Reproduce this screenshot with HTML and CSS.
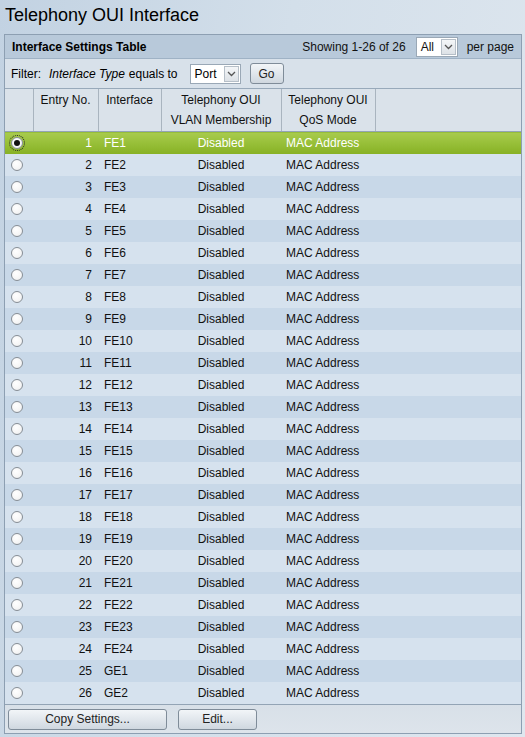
FILE: index.html
```html
<!DOCTYPE html>
<html>
<head>
<meta charset="utf-8">
<link rel="stylesheet" href="styles.css">
</head>
<body>
<h1 class="title">Telephony OUI Interface</h1>
<div class="panel">
  <div class="panel-head">
    <span class="panel-title">Interface Settings Table</span>
    <span class="paging">Showing 1-26 of 26
      <span class="select sel-all"><span class="sel-val">All</span><span class="sel-btn"><svg width="9" height="6" viewBox="0 0 9 6"><path d="M1 1 L4.5 4.5 L8 1" fill="none" stroke="#555" stroke-width="1.3"/></svg></span></span>
      per page</span>
  </div>
  <div class="filter">
    <span>Filter:</span>
    <span class="it">Interface Type</span>
    <span>equals to</span>
    <span class="select sel-port"><span class="sel-val">Port</span><span class="sel-btn"><svg width="9" height="6" viewBox="0 0 9 6"><path d="M1 1 L4.5 4.5 L8 1" fill="none" stroke="#555" stroke-width="1.3"/></svg></span></span>
    <span class="btn btn-go">Go</span>
  </div>
  <table class="grid">
    <colgroup>
      <col class="w-radio"><col class="w-entry"><col class="w-if"><col class="w-vlan"><col class="w-qos"><col>
    </colgroup>
    <thead>
      <tr>
        <th class="c-radio"></th>
        <th class="c-entry">Entry No.</th>
        <th class="c-if">Interface</th>
        <th class="c-vlan">Telephony OUI<br>VLAN Membership</th>
        <th class="c-qos">Telephony OUI<br>QoS Mode</th>
        <th class="c-rest"></th>
      </tr>
    </thead>
    <tbody id="rows"></tbody>
  </table>
  <div class="footer">
    <span class="btn btn-copy">Copy Settings...</span>
    <span class="btn btn-edit">Edit...</span>
  </div>
</div>
<script src="app.js"></script>
</body>
</html>
```
FILE: app.js
```js
var tb = document.getElementById('rows');
var html = '';
for (var i = 1; i <= 26; i++) {
  var name = i <= 24 ? 'FE' + i : 'GE' + (i - 24);
  var cls = i === 1 ? 'sel' : (i % 2 === 0 ? 'even' : 'odd');
  html += '<tr class="' + cls + '">' +
    '<td class="c-radio"><span class="radio' + (i === 1 ? ' on' : '') + '"></span></td>' +
    '<td class="c-entry">' + i + '</td>' +
    '<td class="c-if">' + name + '</td>' +
    '<td class="c-vlan">Disabled</td>' +
    '<td class="c-qos">MAC Address</td>' +
    '<td class="c-rest"></td></tr>';
}
tb.innerHTML = html;
```
FILE: styles.css
```css
html, body {
  margin: 0;
  padding: 0;
}
body {
  width: 525px;
  height: 737px;
  overflow: hidden;
  font-family: Arial, "Liberation Sans", sans-serif;
  font-size: 12px;
  color: #000;
  background: linear-gradient(100deg, #c2d2e2 0%, #d3dfea 45%, #dfe7ef 100%);
}
.title {
  margin: 0;
  padding: 4px 0 0 5px;
  height: 34px;
  box-sizing: border-box;
  font-size: 18px;
  font-weight: normal;
  line-height: 22px;
}
.panel {
  margin-left: 4px;
  width: 518px;
  box-sizing: border-box;
  border: 1px solid #8d9fb2;
  background: #dbe3eb;
}
.panel-head {
  height: 23px;
  background: #b8c9da;
  border-bottom: 1px solid #9fb2c5;
  display: flex;
  align-items: center;
  justify-content: space-between;
  padding: 0 7px 0 7px;
}
.panel-title {
  font-weight: bold;
}
.paging {
  display: flex;
  align-items: center;
  color: #111;
}
.select {
  display: inline-flex;
  align-items: center;
  background: #fff;
  border: 1px solid #9aa8b6;
  height: 20px;
  box-sizing: border-box;
  padding: 1px;
}
.sel-all {
  width: 42px;
  margin: 0 9px 0 10px;
}
.sel-port {
  width: 51px;
  margin: 0 5px 0 8px;
}
.sel-val {
  flex: 1;
  padding-left: 3px;
  font-size: 12px;
}
.sel-btn {
  width: 15px;
  height: 16px;
  box-sizing: border-box;
  border: 1px solid #b6bfc8;
  background: linear-gradient(#f4f6f8, #dde2e7);
  display: flex;
  align-items: center;
  justify-content: center;
}
.filter {
  height: 29px;
  display: flex;
  align-items: center;
  padding-left: 6px;
  gap: 4px;
  background: #d8e1ea;
  border-bottom: 1px solid #98a9ba;
}
.filter .it {
  font-style: italic;
  margin-left: 4px;
}
.btn {
  display: inline-flex;
  align-items: center;
  justify-content: center;
  height: 21px;
  box-sizing: border-box;
  border: 1px solid #7f8c99;
  border-radius: 3px;
  background: linear-gradient(#f2f5f8 0%, #dfe5eb 55%, #cfd7df 100%);
  color: #222;
}
.btn-go {
  width: 34px;
}
.grid {
  width: 100%;
  border-collapse: collapse;
  table-layout: fixed;
}
.w-radio { width: 28px; }
.w-entry { width: 65px; }
.w-if { width: 63px; }
.w-vlan { width: 120px; }
.w-qos { width: 94px; }
.grid th {
  font-weight: normal;
  line-height: 20px;
  height: 41px;
  padding: 1px 0 0 0;
  vertical-align: top;
  background: #dae2ea;
  border-right: 1px solid #a9b4bf;
  border-left: 1px solid #f4f7fa;
  border-bottom: 1px solid #93a4b5;
  color: #111;
}
.grid th.c-radio { border-left: none; }
.grid th.c-rest { border-right: none; }
.grid td {
  height: 22px;
  padding: 0;
  line-height: 22px;
  color: #111;
}
.grid td.c-entry { text-align: right; padding-right: 6px; }
.grid td.c-if { padding-left: 6px; }
.grid td.c-vlan { text-align: center; }
.grid td.c-qos { padding-left: 5px; }
.grid td.c-radio { text-align: center; }
tr.even td { background: #d6e2ee; }
tr.odd td { background: #c8d8e8; }
tr.sel td {
  background: linear-gradient(#a8cb4e 0%, #97bf38 50%, #86b024 100%);
  color: #fff;
}
.radio {
  display: inline-block;
  width: 12px;
  height: 12px;
  box-sizing: border-box;
  border-radius: 50%;
  border: 1px solid #858d95;
  background: radial-gradient(circle at 40% 35%, #fff 0%, #f5f5f5 60%, #e4e6e8 100%);
  vertical-align: middle;
  margin-top: -2px;
  margin-left: -4px;
  position: relative;
}
.radio.on::after {
  content: "";
  position: absolute;
  left: 2px;
  top: 2px;
  width: 6px;
  height: 6px;
  border-radius: 50%;
  background: #111;
}
.radio.on {
  outline: 1px dotted #222;
  outline-offset: 1px;
}
.footer {
  height: 28px;
  border-top: 1px solid #93a4b5;
  display: flex;
  align-items: center;
  padding-left: 3px;
  gap: 11px;
  background: linear-gradient(#d8e0e8, #dde4eb);
}
.btn-copy { width: 159px; }
.btn-edit { width: 79px; }
```
